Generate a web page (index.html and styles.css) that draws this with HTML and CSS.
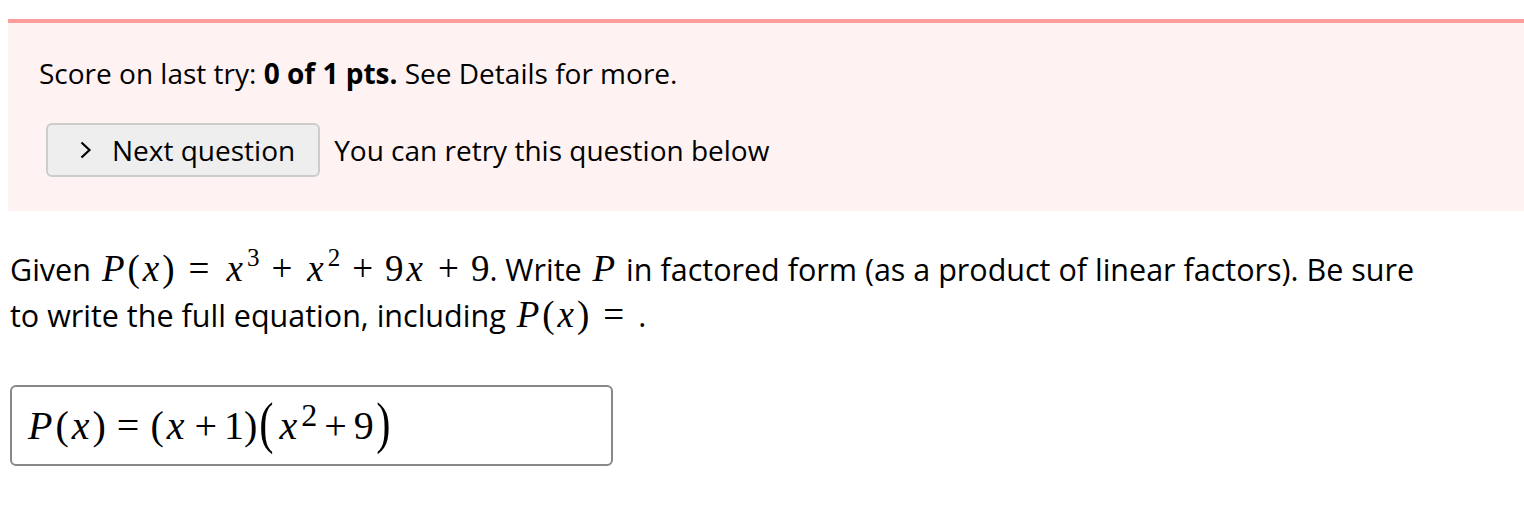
FILE: index.html
```html
<!DOCTYPE html>
<html lang="en">

<head>
  <meta charset="UTF-8">
  <meta name="viewport" content="width=device-width, initial-scale=1.0">
  <title>Question</title>
  <link rel="stylesheet" href="styles.css">
</head>

<body>

  <div class="score-box">
    <p class="score-line">Score on last try: <strong>0 of 1 pts.</strong> See Details for more.</p>
    <div class="retry-row">
      <button type="button" class="next-btn">
        <svg class="chevron" width="12" height="18" viewBox="0 0 12 18">
          <polyline points="1.5,1.5 9.5,9 1.5,16.5" fill="none" stroke="#000" stroke-width="2.2"/>
        </svg>
        Next question
      </button>
      <span>You can retry this question below</span>
    </div>
  </div>

  <p class="question">
    Given <span class="math"><i>P</i>(<i>x</i>)<span class="rel">=</span><i>x</i><sup>3</sup><span class="op">+</span><i>x</i><sup>2</sup><span class="op">+</span>9<i>x</i><span class="op">+</span>9</span>. Write <span class="math"><i>P</i></span> in factored form (as a product of linear factors). Be sure
    to write the full equation, including <span class="math"><i>P</i>(<i>x</i>)<span class="rel">=</span></span>.
  </p>

  <div class="answer-box">
    <span class="math answer"><i>P</i>(<i>x</i>)<span class="rel">=</span>(<i>x</i><span class="op">+</span>1)<span class="big">(</span><i>x</i><sup>2</sup><span class="op">+</span>9<span class="big">)</span></span>
  </div>

</body>

</html>
```

FILE: styles.css
```css
body {
  font-family: 'Open Sans', sans-serif;
  font-size: 28px;
  color: #000;
  background: #fff;
  margin: 0;
  padding: 19px 0 0 8px;
}

.score-box {
  background: #fff2f2;
  border-top: 4px solid #ff9c9c;
  padding: 30px 31px 34px;
}

.score-line {
  margin: 0 0 30px;
  line-height: 40px;
}

.retry-row {
  display: flex;
  align-items: center;
  gap: 14px;
  padding-left: 7px;
}

.next-btn {
  display: flex;
  align-items: center;
  gap: 20px;
  height: 54px;
  padding: 0 23px 0 32px;
  font-family: inherit;
  font-size: 28px;
  color: #000;
  background: #eee;
  border: 2px solid #ccc;
  border-radius: 6px;
}

.question {
  margin: 35px 0 0 2px;
  max-width: 1425px;
  font-size: 30.5px;
  line-height: 46px;
}

.math {
  font-family: 'Liberation Serif', 'DejaVu Serif', serif;
  font-size: 37px;
  white-space: nowrap;
}

.math i {
  font-style: italic;
  margin: 0 3px;
}

.math sup {
  font-size: 25px;
  line-height: 0;
  vertical-align: 15px;
  margin-left: 1px;
}

.op {
  margin: 0 12px;
}

.rel {
  margin: 0 14px;
}

.answer-box {
  box-sizing: border-box;
  width: 603px;
  height: 81px;
  margin: 47px 0 0 2px;
  border: 2px solid #888;
  border-radius: 6px;
  display: flex;
  align-items: center;
  padding: 0 0 0 13px;
}

.answer {
  font-size: 40px;
}

.answer .op {
  margin: 0 7px;
}

.answer .rel {
  margin: 0 11px;
}

.answer sup {
  font-size: 32px;
  vertical-align: 13px;
}

.answer .big {
  display: inline-block;
  font-size: 57px;
  line-height: 0;
  transform: scaleX(0.75);
  vertical-align: -3px;
}
```
